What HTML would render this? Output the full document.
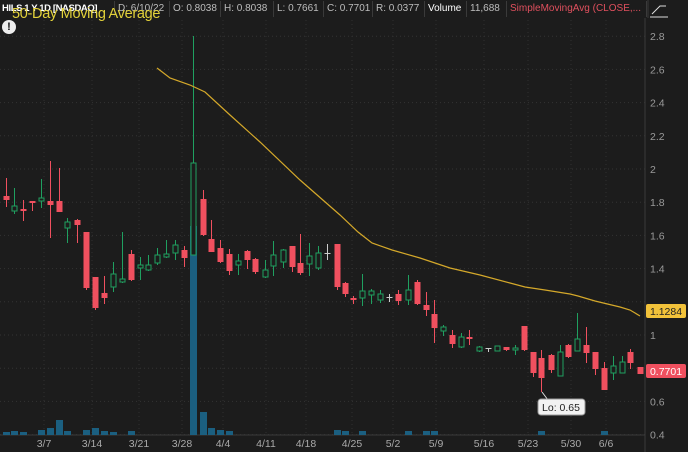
<!DOCTYPE html>
<html><head><meta charset="utf-8"><style>
body{margin:0;width:688px;height:452px;background:#1c1c1c;overflow:hidden;font-family:"Liberation Sans",sans-serif;position:relative}
#hdr{position:absolute;left:0;top:0;height:18px;width:688px;font-size:10px;color:#bdbdbd;white-space:nowrap}
.c{position:absolute;top:1px;height:16px;line-height:16px;border-left:1px solid #3a3a3a;padding-left:3px;background:#1c1c1c}
#ma{position:absolute;left:12px;top:6px;color:#e3d23a;font-size:14.5px;letter-spacing:-0.3px}
#ex{position:absolute;left:2px;top:20px;width:14px;height:14px;border-radius:50%;background:#eee;color:#111;font-weight:bold;font-size:11px;text-align:center;line-height:14px}
svg{position:absolute;left:0;top:0}
</style></head><body>
<svg id="s" width="688" height="452"></svg>
<div id="hdr">
<div class="c" style="left:0;border:none;color:#fff;font-weight:bold;padding-left:2px;letter-spacing:-0.4px;font-size:9.5px;background:none">HILS 1 Y 1D [NASDAQ]</div>
<div class="c" style="left:114px">D: 6/10/22</div>
<div class="c" style="left:169px">O: 0.8038</div>
<div class="c" style="left:220px">H: 0.8038</div>
<div class="c" style="left:273px">L: 0.7661</div>
<div class="c" style="left:323px">C: 0.7701</div>
<div class="c" style="left:372px">R: 0.0377</div>
<div class="c" style="left:424px;color:#fff">Volume</div>
<div class="c" style="left:466px">11,688</div>
<div class="c" style="left:506px;color:#e0505e;width:136px;border-right:1px solid #3a3a3a">SimpleMovingAvg (CLOSE,...</div>
</div>
<div id="ma">50-Day Moving Average</div>
<div id="ex">!</div>
<script>
var s=document.getElementById('s'),h='';
var P=[2.8,2.6,2.4,2.2,2,1.8,1.6,1.4,1.2,1,0.8,0.6,0.4];
P.forEach(function(p){var y=335-(p-1)*166;h+='<line x1="0" x2="645" y1="'+y+'" y2="'+y+'" stroke="#333" stroke-dasharray="1 3"/>';
if(p!=1.2&&p!=0.8)h+='<text x="650" y="'+(y+4)+'" fill="#9a9a9a" font-size="10.5">'+p+'</text>';});
var D=[[44,'3/7'],[92,'3/14'],[139,'3/21'],[182,'3/28'],[223,'4/4'],[266,'4/11'],[306,'4/18'],[352,'4/25'],[393,'5/2'],[436,'5/9'],[484,'5/16'],[528,'5/23'],[571,'5/30'],[606,'6/6']];
D.forEach(function(d){h+='<line x1="'+d[0]+'" x2="'+d[0]+'" y1="20" y2="435" stroke="#303030" stroke-dasharray="1 3"/><text x="'+d[0]+'" y="447" fill="#aaa" font-size="10.5" text-anchor="middle">'+d[1]+'</text>';});
h+='<line x1="645" x2="645" y1="18" y2="452" stroke="#3a3a3a"/><line x1="0" x2="645" y1="435" y2="435" stroke="#3a3a3a"/>';
[[6,432],[14,431],[23,432],[41,430],[50,428],[59,420],[67,431],[86,430],[95,428],[104,431],[113,432],[131,431],[193,226],[203,412],[211,428],[220,430],[229,431],[337,430],[345,431],[362,431],[408,431],[426,431],[434,431],[541,431],[604,431]].forEach(function(v){h+='<rect x="'+(v[0]-3)+'" y="'+v[1]+'" width="7" height="'+(435-v[1])+'" fill="#1b5f80"/>';});
var C=[[6,178,196,200,207,'r'],[14,188,206,211,214,'g'],[23,200,209,211,221,'r'],[32,201,201,203,211,'r'],[41,179,198,201,208,'g'],[50,161,201,205,238,'r'],[59,168,201,212,212,'r'],[67,218,222,228,243,'g'],[77,219,220,225,243,'r'],[86,232,232,288,290,'r'],[95,277,277,308,310,'r'],[104,276,293,298,304,'r'],[113,262,274,287,292,'g'],[122,232,279,282,283,'g'],[131,250,254,280,281,'r'],[140,257,265,268,280,'g'],[148,255,265,270,271,'g'],[157,248,255,263,265,'g'],[166,240,254,257,258,'g'],[175,240,245,253,260,'g'],[184,246,250,258,267,'r'],[193,36,163,255,255,'g'],[203,190,199,235,236,'r'],[211,220,239,252,252,'r'],[220,240,248,262,263,'r'],[229,249,254,271,275,'r'],[238,254,261,265,275,'g'],[247,250,251,260,269,'r'],[255,258,259,272,274,'r'],[265,260,270,277,278,'g'],[273,241,255,266,276,'g'],[283,249,250,262,268,'g'],[292,246,246,267,272,'r'],[300,234,263,273,275,'r'],[309,243,256,264,276,'g'],[318,246,253,268,270,'g'],[327,244,253,254,260,'w'],[337,244,244,287,290,'r'],[345,282,283,294,297,'r'],[353,296,298,300,304,'r'],[362,274,291,298,306,'g'],[371,289,291,295,304,'g'],[380,290,294,300,303,'g'],[389,294,297,298,302,'w'],[398,290,294,301,305,'r'],[408,275,290,300,305,'g'],[417,280,282,304,305,'r'],[426,292,305,310,316,'r'],[434,300,314,328,343,'r'],[443,325,327,331,336,'g'],[452,330,335,344,348,'r'],[461,333,337,347,348,'g'],[469,330,337,339,345,'r'],[479,346,347,351,352,'g'],[488,348,348,349,352,'w'],[497,346,346,351,351,'g'],[506,347,347,350,351,'r'],[515,345,348,350,355,'g'],[524,326,326,350,351,'r'],[533,352,352,373,377,'r'],[541,350,358,378,392,'r'],[551,354,355,370,373,'r'],[560,345,352,376,376,'g'],[568,344,345,357,358,'r'],[577,313,339,351,351,'g'],[586,327,345,353,363,'r'],[595,352,352,369,375,'r'],[604,362,368,390,390,'r'],[613,356,366,373,380,'g'],[622,356,362,373,373,'g'],[630,349,352,363,369,'r'],[640,367,367,374,374,'r']];
C.forEach(function(c){var col=c[5]=='r'?'#f0505f':c[5]=='g'?'#1fa060':'#ccc';
h+='<line x1="'+(c[0]+.5)+'" x2="'+(c[0]+.5)+'" y1="'+c[1]+'" y2="'+c[4]+'" stroke="'+col+'"/>';
var bh=Math.max(1,c[3]-c[2]);
if(c[5]=='g')h+='<rect x="'+(c[0]-2)+'" y="'+c[2]+'" width="5" height="'+bh+'" fill="#1c1c1c" stroke="'+col+'"/>';
else h+='<rect x="'+(c[0]-2.5)+'" y="'+c[2]+'" width="6" height="'+bh+'" fill="'+col+'"/>';});
h+='<polyline fill="none" stroke="#d4a82a" stroke-width="1.2" points="157,68 170,78 190,85 205,92 230,115 260,142 300,180 340,215 358,232 372,243 392,250 420,258 450,268 480,275 510,283 525,287 545,290 570,294 578,296 595,301 620,307 630,310 640,316"/>';
h+='<rect x="646" y="304" width="40" height="14" rx="2" fill="#f2c23a"/><text x="666" y="315" fill="#222" font-size="10.5" text-anchor="middle">1.1284</text>';
h+='<rect x="646" y="364" width="40" height="14" rx="2" fill="#f0505f"/><text x="666" y="375" fill="#fff" font-size="10.5" text-anchor="middle">0.7701</text>';
h+='<line x1="542" y1="392" x2="548" y2="400" stroke="#ddd"/><rect x="538" y="399" width="47" height="16" rx="3" fill="#f2f2f2" stroke="#999"/><text x="561" y="411" fill="#222" font-size="10.5" text-anchor="middle">Lo: 0.65</text>';
h+='<path d="M652 14 L660 6 H666 M650 17H668" stroke="#ddd" fill="none"/><line x1="648" y1="0" x2="648" y2="18" stroke="#3a3a3a"/>';
s.innerHTML=h;
</script>
</body></html>
